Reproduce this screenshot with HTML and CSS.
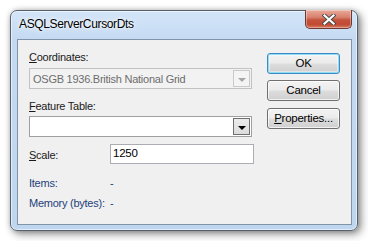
FILE: index.html
```html
<!DOCTYPE html>
<html>
<head>
<meta charset="utf-8">
<link rel="stylesheet" href="styles.css">
</head>
<body>
<div class="desk">
  <div class="window">
    <div class="titlebar">
      <span class="title">ASQLServerCursorDts</span>
      <div class="close">
        <svg width="14" height="11" viewBox="0 0 14 11">
          <path d="M2.5 1.5 L11.5 9.5 M11.5 1.5 L2.5 9.5" stroke="#4a4a4a" stroke-width="4" stroke-linecap="square" fill="none"/>
          <path d="M2.5 1.5 L11.5 9.5 M11.5 1.5 L2.5 9.5" stroke="#ffffff" stroke-width="2.2" stroke-linecap="square" fill="none"/>
        </svg>
      </div>
    </div>
    <div class="client">
      <div class="form">
        <div class="label"><u>C</u>oordinates:</div>
        <div class="combo disabled">
          <span class="combo-text">OSGB 1936.British National Grid</span>
          <span class="drop"><span class="arrow"></span></span>
        </div>
        <div class="label gap-feature"><u>F</u>eature Table:</div>
        <div class="combo active">
          <span class="combo-text"></span>
          <span class="drop"><span class="arrow"></span></span>
        </div>
        <div class="row scale-row">
          <div class="row-label scale-label"><u>S</u>cale:</div>
          <div class="textbox">1250</div>
        </div>
        <div class="row info items-row">
          <div class="row-label">Items:</div>
          <div class="value">-</div>
        </div>
        <div class="row info mem-row">
          <div class="row-label">Memory (bytes):</div>
          <div class="value">-</div>
        </div>
      </div>
      <div class="buttons">
        <div class="btn default">OK</div>
        <div class="btn cancel">Cancel</div>
        <div class="btn props"><u>P</u>roperties...</div>
      </div>
    </div>
  </div>
</div>
</body>
</html>
```
FILE: styles.css
```css
html, body {
  margin: 0;
  padding: 0;
  background: #ffffff;
}
body {
  width: 368px;
  height: 241px;
  overflow: hidden;
  font-family: "Liberation Sans", Arial, sans-serif;
}
.desk {
  padding: 10px;
}
.window {
  box-sizing: border-box;
  width: 348px;
  height: 221px;
  border: 1px solid #56616d;
  border-radius: 7px;
  padding: 0 5px 5px 6px;
  background: linear-gradient(to bottom, #d3e5f8 0px, #c4daf2 30px, #bfd6ef 100%);
  box-shadow: inset 0 0 0 1px rgba(255,255,255,0.55), 3px 3px 9px rgba(0,0,0,0.45), 0 0 5px rgba(0,0,0,0.18);
  display: flex;
  flex-direction: column;
}
.titlebar {
  height: 28px;
  display: flex;
  align-items: flex-start;
  flex: none;
}
.title {
  padding: 5px 0 0 2px;
  font-size: 12px;
  line-height: 16px;
  letter-spacing: -0.35px;
  color: #000;
  text-shadow: 0 0 6px #ffffff, 0 0 3px #ffffff;
}
.close {
  margin-left: auto;
  margin-top: -1px;
  width: 47px;
  height: 19px;
  box-sizing: border-box;
  border: 1px solid #6c3a33;
  border-top: none;
  border-radius: 0 0 5px 5px;
  background: linear-gradient(to bottom, #e9a99a 0%, #d9826f 40%, #c4533b 55%, #c24a33 80%, #d47a5f 100%);
  box-shadow: inset 0 0 0 1px rgba(255,255,255,0.35);
  display: flex;
  align-items: center;
  justify-content: center;
}
.close svg {
  display: block;
}
.client {
  flex: 1;
  box-sizing: border-box;
  border: 1px solid #8293a8;
  background: #f0f0f0;
  display: flex;
  padding: 11px 0 0 11px;
  font-size: 11px;
  letter-spacing: -0.25px;
  color: #000;
}
.form {
  width: 225px;
  flex: none;
}
.label {
  line-height: 13px;
  height: 13px;
  color: #1a1a1a;
}
.gap-feature {
  margin-top: 11px;
}
.combo {
  box-sizing: border-box;
  width: 223px;
  height: 21px;
  margin-top: 4px;
  border: 1px solid #a9a9a9;
  display: flex;
  align-items: center;
  padding: 0 1px 0 3px;
}
.combo.active {
  margin-top: 3px;
  background: #ffffff;
  border-color: #a0a0a0;
}
.combo.disabled {
  background: #f2f2f2;
  border-color: #c2c2c2;
  color: #6d6d6d;
}
.combo-text {
  flex: 1;
  line-height: 13px;
  padding-top: 1px;
}
.drop {
  box-sizing: border-box;
  width: 17px;
  height: 17px;
  display: flex;
  align-items: center;
  justify-content: center;
}
.disabled .drop {
  border: 1px solid #c9c9c9;
  background: #f4f4f4;
}
.active .drop {
  border: 1px solid #6f6f6f;
  background: linear-gradient(to bottom, #ececec, #dcdcdc);
}
.arrow {
  width: 0;
  height: 0;
  border-left: 4px solid transparent;
  border-right: 4px solid transparent;
  border-top: 4px solid #000;
  margin-top: 2px;
}
.disabled .arrow {
  border-top-color: #a6a6a6;
}
.row {
  display: flex;
  align-items: flex-start;
}
.row-label {
  width: 81px;
  flex: none;
  line-height: 13px;
}
.scale-row {
  margin-top: 7px;
  height: 20px;
}
.scale-label {
  padding-top: 5px;
  color: #1a1a1a;
}
.textbox {
  box-sizing: border-box;
  width: 144px;
  height: 20px;
  border: 1px solid #abadb3;
  background: #ffffff;
  line-height: 13px;
  padding: 2px 2px 0 2px;
  font-size: 11.5px;
}
.info {
  color: #23427a;
}
.items-row {
  margin-top: 13px;
}
.mem-row {
  margin-top: 7px;
}
.value {
  line-height: 13px;
}
.buttons {
  margin-left: 13px;
  margin-top: 2px;
  display: flex;
  flex-direction: column;
}
.btn {
  box-sizing: border-box;
  width: 73px;
  height: 21px;
  border: 1px solid #707070;
  border-radius: 3px;
  background: linear-gradient(to bottom, #f3f3f3 0%, #ebebeb 48%, #dddddd 52%, #cfcfcf 100%);
  box-shadow: inset 0 0 0 1px rgba(255,255,255,0.7);
  text-align: center;
  line-height: 18px;
  font-size: 11.5px;
  color: #000;
}
.btn.default {
  border-color: #3c8bc4;
  box-shadow: inset 0 0 0 1px #8fdcf7, inset 0 0 0 2px rgba(255,255,255,0.4);
}
.cancel {
  margin-top: 6px;
}
.props {
  margin-top: 7px;
}
u {
  text-decoration: underline;
  text-underline-offset: 1px;
}
```
